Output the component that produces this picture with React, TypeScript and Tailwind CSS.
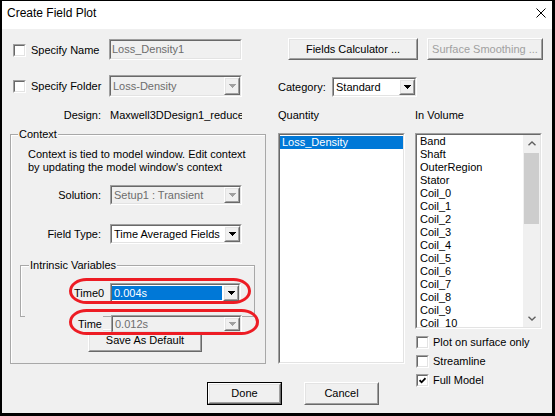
import * as React from 'react';
import clsx from 'clsx';

type BoxProps = { className?: string; inner?: string; children?: React.ReactNode };

// classic 3D edges: sunken for edits, lists and checkboxes, raised for buttons
const Sunken = ({ className, inner, children }: BoxProps) => (
  <div className={clsx('border border-t-[#a0a0a0] border-l-[#a0a0a0] border-b-white border-r-white', className)}>
    <div className={clsx('h-full w-full border border-t-[#696969] border-l-[#696969] border-b-[#e3e3e3] border-r-[#e3e3e3]', inner)}>
      {children}
    </div>
  </div>
);

const Raised = ({ className, inner, children }: BoxProps) => (
  <div className={clsx('border border-t-white border-l-white border-b-[#696969] border-r-[#696969]', className)}>
    <div className={clsx('h-full w-full border border-t-[#e3e3e3] border-l-[#e3e3e3] border-b-[#a0a0a0] border-r-[#a0a0a0]', inner)}>
      {children}
    </div>
  </div>
);

const Arrow = ({ disabled }: { disabled?: boolean }) => (
  <svg width="7" height="4" viewBox="0 0 7 4" shapeRendering="crispEdges">
    <path d="M0 0h7v1h-1v1h-1v1h-1v1h-1v-1h-1v-1h-1v-1h-1z" fill={disabled ? '#a0a0a0' : '#000'} />
  </svg>
);

interface ComboProps {
  value: string;
  className?: string;
  disabled?: boolean;
  selected?: boolean;
}

const Combo = ({ value, className, disabled, selected }: ComboProps) => (
  <Sunken className={className} inner={clsx('flex', disabled ? 'bg-[#f0f0f0]' : 'bg-white')}>
    <div
      className={clsx(
        'flex flex-1 items-center overflow-hidden whitespace-nowrap',
        selected ? 'my-[1px] ml-[0px] mr-[1px] bg-[#0078d7] pl-[2px] text-white' : 'pl-[2px]',
        disabled && 'text-[#6d6d6d]'
      )}
    >
      {value}
    </div>
    <Raised className="h-full w-[16px] shrink-0" inner="flex items-center justify-center bg-[#f0f0f0]">
      <Arrow disabled={disabled} />
    </Raised>
  </Sunken>
);

const Button = ({
  label,
  className,
  disabled,
  isDefault
}: {
  label: string;
  className?: string;
  disabled?: boolean;
  isDefault?: boolean;
}) => (
  <div className={clsx(isDefault && 'border border-black', className)}>
    <Raised className="h-full w-full" inner={clsx('flex items-center justify-center', disabled && 'text-[#a0a0a0]')}>
      {label}
    </Raised>
  </div>
);

const Check = ({ checked }: { checked?: boolean }) => (
  <Sunken className="h-[13px] w-[13px] shrink-0" inner="flex items-center justify-center bg-white">
    {checked && (
      <svg width="7" height="7" viewBox="0 0 7 7">
        <path d="M0.6 3.2 L2.6 5.3 L6.5 1.2" fill="none" stroke="#000" strokeWidth="1.8" />
      </svg>
    )}
  </Sunken>
);

const volumes = [
  'Band',
  'Shaft',
  'OuterRegion',
  'Stator',
  'Coil_0',
  'Coil_1',
  'Coil_2',
  'Coil_3',
  'Coil_4',
  'Coil_5',
  'Coil_6',
  'Coil_7',
  'Coil_8',
  'Coil_9',
  'Coil_10'
];

const Chevron = ({ down }: { down?: boolean }) => (
  <svg width="8" height="5" viewBox="0 0 8 5">
    <path d={down ? 'M0.5 0.8 L4 4 L7.5 0.8' : 'M0.5 4.2 L4 1 L7.5 4.2'} fill="none" stroke="#606060" strokeWidth="1.4" />
  </svg>
);

export default function App() {
  return (
    <div className="relative flex h-[416px] w-[555px] flex-col overflow-hidden border-t border-l-2 border-r-[3px] border-b-[3px] border-black bg-[#f0f0f0] font-['Liberation_Sans',Arial,sans-serif] text-[11px] leading-[13px] text-black">
      {/* title bar */}
      <div className="flex h-[28px] shrink-0 items-start justify-between bg-white pl-[5px] pr-[6px]">
        <span className="mt-[5px] text-[12px] leading-[15px]">Create Field Plot</span>
        <svg className="mt-[7px]" width="10" height="10" viewBox="0 0 10 10">
          <path d="M0.5 0.5 L9.5 9.5 M9.5 0.5 L0.5 9.5" stroke="#000" strokeWidth="1" />
        </svg>
      </div>

      {/* header rows */}
      <div className="flex pl-[8px]">
        <div className="flex w-[256px] flex-col">
          <div className="mt-[10px] flex h-[21px] items-center">
            <div className="flex w-[99px] items-center pl-[3px] pt-[2px]">
              <Check />
              <span className="ml-[5px]">Specify Name</span>
            </div>
            <Sunken className="h-[21px] w-[133px]" inner="flex items-center bg-[#f0f0f0] pl-[1px] text-[#6d6d6d]">
              Loss_Density1
            </Sunken>
          </div>
          <div className="mt-[15px] flex h-[22px] items-center">
            <div className="flex w-[99px] items-center pl-[3px]">
              <Check />
              <span className="ml-[5px]">Specify Folder</span>
            </div>
            <Combo value="Loss-Density" disabled className="h-[22px] w-[133px]" />
          </div>
          <div className="mt-[12px] flex h-[13px]">
            <span className="w-[91px] text-right">Design:</span>
            <span className="ml-[9px] w-[132px] overflow-hidden whitespace-nowrap">Maxwell3DDesign1_reduced</span>
          </div>
        </div>

        <div className="ml-[12px] flex w-[265px] flex-col">
          <div className="mt-[9px] flex">
            <Button label="Fields Calculator ..." className="ml-[10px] h-[22px] w-[130px]" />
            <Button label="Surface Smoothing ..." disabled className="ml-[9px] h-[22px] w-[116px]" />
          </div>
          <div className="mt-[17px] flex h-[20px] items-center">
            <span className="w-[54px]">Category:</span>
            <Combo value="Standard" className="h-[20px] w-[85px]" />
          </div>
          <div className="mt-[12px] flex h-[13px]">
            <span className="w-[137px]">Quantity</span>
            <span>In Volume</span>
          </div>
        </div>
      </div>

      {/* main area */}
      <div className="mt-[11px] flex pl-[8px]">
        <div className="flex flex-col">
          <div className="flex">
            <div className="relative mt-[1px] flex h-[230px] w-[256px] flex-col border border-[#a8a8a8] shadow-[inset_1px_1px_0_#fff]">
              <span className="absolute -top-[7px] left-[7px] bg-[#f0f0f0] px-[1px]">Context</span>
              <div className="pl-[17px] pt-[13px]">
                Context is tied to model window. Edit context
                <br />
                by updating the model window's context
              </div>
              <div className="mt-[11px] flex h-[20px] items-center">
                <span className="w-[90px] text-right">Solution:</span>
                <Combo value="Setup1 : Transient" disabled className="ml-[9px] h-[20px] w-[132px]" />
              </div>
              <div className="mt-[19px] flex h-[20px] items-center">
                <span className="w-[90px] text-right">Field Type:</span>
                <Combo value="Time Averaged Fields" className="ml-[9px] h-[20px] w-[132px]" />
              </div>

              <div className="relative ml-[9px] mt-[21px] h-[52px] w-[235px] border border-[#a8a8a8] shadow-[inset_1px_1px_0_#fff]">
                <span className="absolute -top-[7px] left-[8px] bg-[#f0f0f0] px-[1px]">Intrinsic Variables</span>
                <div className="mt-[17px] flex h-[20px] items-center">
                  <span className="w-[89px] pl-[53px]">Time0</span>
                  <Combo value="0.004s" selected className="h-[20px] w-[131px]" />
                </div>
              </div>

              <div className="relative z-10 -mt-[2px] ml-[14px] flex h-[18px]">
                <span className="flex w-[78px] items-center justify-end bg-[#f0f0f0] pr-[1px]">Time</span>
                <Combo value="0.012s" disabled className="ml-[8px] h-[18px] w-[131px]" />
              </div>
              <Button label="Save As Default" className="-mt-[4px] ml-[77px] h-[23px] w-[114px]" />
            </div>

            <Sunken className="ml-[12px] h-[231px] w-[127px]" inner="bg-white pt-[1px]">
              <div className="h-[13px] bg-[#0078d7] pl-[2px] text-white">Loss_Density</div>
            </Sunken>
          </div>

          <div className="mt-[18px] flex">
            <Button label="Done" isDefault className="ml-[197px] h-[23px] w-[75px]" />
            <Button label="Cancel" className="ml-[22px] h-[23px] w-[75px]" />
          </div>
        </div>

        <div className="ml-[10px] flex w-[127px] flex-col">
          <Sunken className="h-[196px] w-[127px]" inner="flex bg-white">
            <div className="flex-1 overflow-hidden pl-[3px]">
              {volumes.map(v => (
                <div key={v} className="h-[13px] whitespace-nowrap">
                  {v}
                </div>
              ))}
            </div>
            <div className="flex w-[17px] flex-col bg-[#f0f0f0]">
              <div className="flex h-[17px] items-center justify-center">
                <Chevron />
              </div>
              <div className="mx-[1px] mt-[1px] h-[71px] bg-[#cdcdcd]" />
              <div className="flex-1" />
              <div className="flex h-[17px] items-center justify-center">
                <Chevron down />
              </div>
            </div>
          </Sunken>
          <div className="mt-[4px] flex flex-col pl-[1px]">
            {[
              ['Plot on surface only', false],
              ['Streamline', false],
              ['Full Model', true]
            ].map(([label, checked]) => (
              <div key={label as string} className="flex h-[19px] items-center">
                <Check checked={checked as boolean} />
                <span className="ml-[4px]">{label}</span>
              </div>
            ))}
          </div>
        </div>
      </div>

      {/* red markup around the time variables */}
      <svg
        className="pointer-events-none absolute -left-[2px] -top-[1px] z-20"
        width="555"
        height="416"
        viewBox="0 0 555 416"
      >
        <rect x="70.5" y="279.5" width="179" height="23" rx="16" ry="11.5" fill="none" stroke="#ed1c24" strokeWidth="3" />
        <rect x="70.5" y="310.5" width="187" height="23" rx="16" ry="11.5" fill="none" stroke="#ed1c24" strokeWidth="3" />
      </svg>
    </div>
  );
}
